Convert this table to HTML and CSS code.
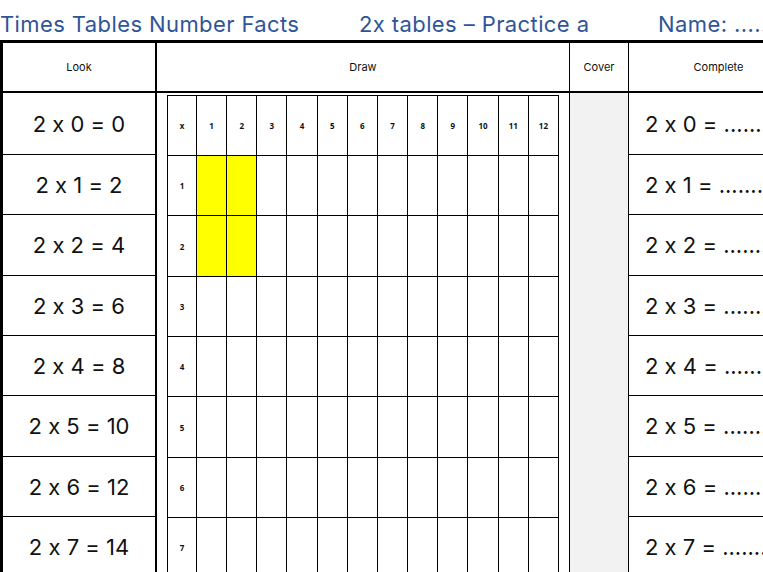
FILE: index.html
```html
<!DOCTYPE html>
<html>
<head>
<meta charset="utf-8">
<link rel="stylesheet" href="styles.css">
</head>
<body>
<div class="title-bar">
  <span class="title">Times Tables Number Facts</span>
  <span class="title">2x tables – Practice a</span>
  <span class="title">Name: .........................</span>
</div>
<div class="sheet">
  <div class="head">Look</div>
  <div class="head">Draw</div>
  <div class="head">Cover</div>
  <div class="head">Complete</div>

  <div class="look">2 x 0 = 0</div>
  <div class="draw">
    <div class="grid">
      <div class="g h">x</div><div class="g h">1</div><div class="g h">2</div><div class="g h">3</div><div class="g h">4</div><div class="g h">5</div><div class="g h">6</div><div class="g h">7</div><div class="g h">8</div><div class="g h">9</div><div class="g h">10</div><div class="g h">11</div><div class="g h">12</div>
      <div class="g h">1</div><div class="g y"></div><div class="g y"></div><div class="g"></div><div class="g"></div><div class="g"></div><div class="g"></div><div class="g"></div><div class="g"></div><div class="g"></div><div class="g"></div><div class="g"></div><div class="g"></div>
      <div class="g h">2</div><div class="g y"></div><div class="g y"></div><div class="g"></div><div class="g"></div><div class="g"></div><div class="g"></div><div class="g"></div><div class="g"></div><div class="g"></div><div class="g"></div><div class="g"></div><div class="g"></div>
      <div class="g h">3</div><div class="g"></div><div class="g"></div><div class="g"></div><div class="g"></div><div class="g"></div><div class="g"></div><div class="g"></div><div class="g"></div><div class="g"></div><div class="g"></div><div class="g"></div><div class="g"></div>
      <div class="g h">4</div><div class="g"></div><div class="g"></div><div class="g"></div><div class="g"></div><div class="g"></div><div class="g"></div><div class="g"></div><div class="g"></div><div class="g"></div><div class="g"></div><div class="g"></div><div class="g"></div>
      <div class="g h">5</div><div class="g"></div><div class="g"></div><div class="g"></div><div class="g"></div><div class="g"></div><div class="g"></div><div class="g"></div><div class="g"></div><div class="g"></div><div class="g"></div><div class="g"></div><div class="g"></div>
      <div class="g h">6</div><div class="g"></div><div class="g"></div><div class="g"></div><div class="g"></div><div class="g"></div><div class="g"></div><div class="g"></div><div class="g"></div><div class="g"></div><div class="g"></div><div class="g"></div><div class="g"></div>
      <div class="g h">7</div><div class="g"></div><div class="g"></div><div class="g"></div><div class="g"></div><div class="g"></div><div class="g"></div><div class="g"></div><div class="g"></div><div class="g"></div><div class="g"></div><div class="g"></div><div class="g"></div>
    </div>
  </div>
  <div class="cover"></div>
  <div class="complete">2 x 0 = .........</div>

  <div class="look">2 x 1 = 2</div>
  <div class="cover"></div>
  <div class="complete">2 x 1 = .........</div>

  <div class="look">2 x 2 = 4</div>
  <div class="cover"></div>
  <div class="complete">2 x 2 = .........</div>

  <div class="look">2 x 3 = 6</div>
  <div class="cover"></div>
  <div class="complete">2 x 3 = .........</div>

  <div class="look">2 x 4 = 8</div>
  <div class="cover"></div>
  <div class="complete">2 x 4 = .........</div>

  <div class="look">2 x 5 = 10</div>
  <div class="cover"></div>
  <div class="complete">2 x 5 = .........</div>

  <div class="look">2 x 6 = 12</div>
  <div class="cover"></div>
  <div class="complete">2 x 6 = .........</div>

  <div class="look">2 x 7 = 14</div>
  <div class="cover"></div>
  <div class="complete">2 x 7 = .........</div>
</div>
</body>
</html>
```

FILE: styles.css
```css
html, body {
  margin: 0;
  padding: 0;
  overflow: hidden;
  background: #fff;
}
body {
  width: 763px;
  height: 572px;
  font-family: "Inter", "Liberation Sans", sans-serif;
  font-feature-settings: "calt" 0;
  color: #111;
}
.title-bar {
  display: grid;
  grid-template-columns: 359px 299px auto;
  height: 40px;
  padding-top: 11px;
  box-sizing: border-box;
  white-space: nowrap;
  overflow: hidden;
}
.title {
  font-size: 22px;
  line-height: 26px;
  color: #2f5597;
  letter-spacing: 0.4px;
}
.sheet {
  display: grid;
  grid-template-columns: 154px 413px 59px 180px;
  grid-template-rows: 50px 62px 60px 61px 60px 60px 61px 60px 60px;
  width: 809px;
  border-top: 3px solid #000;
  border-left: 3px solid #000;
}
.head {
  display: flex;
  align-items: center;
  justify-content: center;
  font-size: 11px;
  border-right: 1px solid #000;
  border-bottom: 2px solid #000;
}
.head:first-child {
  border-right-width: 2px;
}
.look {
  grid-column: 1;
  display: flex;
  align-items: center;
  justify-content: center;
  font-size: 22px;
  border-right: 2px solid #000;
  border-bottom: 1px solid #000;
  white-space: nowrap;
}
.draw {
  grid-column: 2;
  grid-row: 2 / span 8;
  border-right: 1px solid #000;
  padding: 2px 0 0 10px;
}
.grid {
  display: grid;
  grid-template-columns: 29px repeat(12, 1fr);
  grid-template-rows: 60px 60px 61px 60px 60px 61px 60px 60px;
  width: 392px;
  border-top: 1px solid #000;
  border-left: 1px solid #000;
  box-sizing: border-box;
}
.g {
  border-right: 1px solid #000;
  border-bottom: 1px solid #000;
}
.h {
  display: flex;
  align-items: center;
  justify-content: center;
  font-family: "Open Sans", "DejaVu Sans", sans-serif;
  font-weight: 700;
  font-size: 8px;
}
.y {
  background: #ffff00;
}
.cover {
  grid-column: 3;
  background: #f2f2f2;
  border-right: 1px solid #000;
}
.complete {
  grid-column: 4;
  display: flex;
  align-items: center;
  padding-left: 16px;
  font-size: 22px;
  white-space: nowrap;
  overflow: hidden;
  border-bottom: 1px solid #000;
}
```
